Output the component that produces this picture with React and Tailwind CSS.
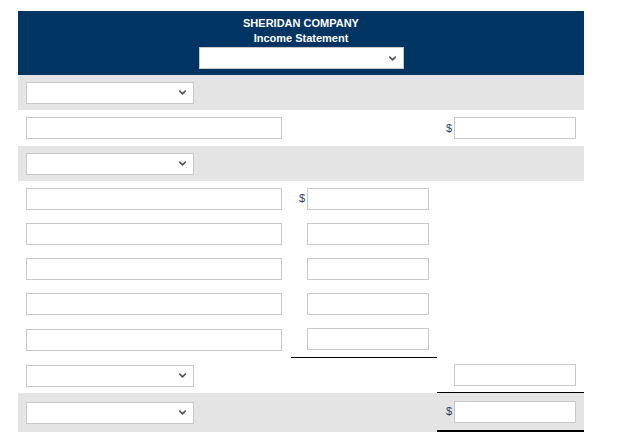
import { ChevronDown } from "lucide-react";

const font = { fontFamily: "'Liberation Sans', Arial, sans-serif" };

function Box({ className = "" }) {
  return <div className={`h-[22px] bg-white border border-[#c9c9c9] ${className}`} />;
}

function Select({ className = "w-[168px]" }) {
  return (
    <div className={`h-[22px] bg-white border border-[#c9c9c9] flex items-center justify-end pr-[5px] ${className}`}>
      <ChevronDown className="w-[11px] h-[11px] text-[#555]" strokeWidth={3.5} />
    </div>
  );
}

function Dollar() {
  return <span className="text-[11px] text-[#2a3f5c] w-[8px] leading-none">$</span>;
}

function Row({ gray, h = "h-[35px]", a, b, c, bClass = "", cClass = "" }) {
  return (
    <div className={`flex ${h} ${gray ? "bg-[#e4e4e4]" : "bg-white"}`}>
      <div className="w-[273px] flex items-center pl-[8px]">{a}</div>
      <div className={`w-[146px] flex items-center pl-[8px] ${bClass}`}>{b}</div>
      <div className={`w-[147px] flex items-center pl-[9px] ${cClass}`}>{c}</div>
    </div>
  );
}

export default function App() {
  const cell = (dollar) => (
    <>
      {dollar ? <Dollar /> : <span className="w-[8px]" />}
      <Box className="w-[122px]" />
    </>
  );
  const left = <Box className="w-[256px]" />;

  return (
    <div className="w-[628px] h-[448px] bg-white pt-[11px] pl-[18px]" style={font}>
      <div className="w-[566px]">
        <div className="bg-[#003462] h-[64px] flex flex-col items-center pt-[5px] text-white font-bold text-[11px] leading-[15px]">
          <div>SHERIDAN COMPANY</div>
          <div>Income Statement</div>
          <Select className="w-[205px] mt-[1px]" />
        </div>
        <Row gray a={<Select />} />
        <Row h="h-[36px]" a={left} c={cell(true)} />
        <Row gray a={<Select />} />
        <Row a={left} b={cell(true)} />
        <Row a={left} b={cell(false)} />
        <Row a={left} b={cell(false)} />
        <Row a={left} b={cell(false)} />
        <Row h="h-[37px]" a={left} b={cell(false)} bClass="border-b border-black" />
        <Row a={<Select />} c={cell(false)} cClass="border-b border-black" />
        <Row gray h="h-[39px]" a={<Select />} c={cell(true)} cClass="border-b-2 border-black" />
      </div>
    </div>
  );
}
